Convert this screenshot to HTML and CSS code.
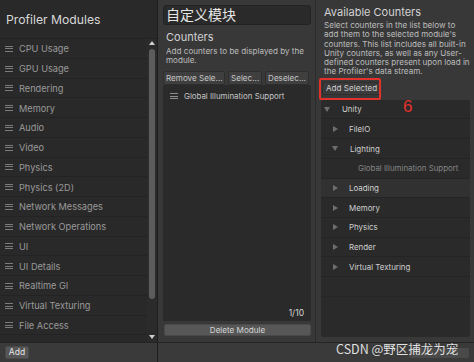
FILE: index.html
```html
<!DOCTYPE html>
<html lang="en">
<head>
<meta charset="utf-8">
<title>Profiler Modules</title>
<link rel="stylesheet" href="styles.css">
</head>
<body>
<div class="app">
  <div class="main">
    <section class="left">
      <header class="left-title">Profiler Modules</header>
      <div class="left-body">
        <ul class="module-list">
          <li class="module"><span class="grip"></span>CPU Usage</li>
          <li class="module"><span class="grip"></span>GPU Usage</li>
          <li class="module"><span class="grip"></span>Rendering</li>
          <li class="module"><span class="grip"></span>Memory</li>
          <li class="module"><span class="grip"></span>Audio</li>
          <li class="module"><span class="grip"></span>Video</li>
          <li class="module"><span class="grip"></span>Physics</li>
          <li class="module"><span class="grip"></span>Physics (2D)</li>
          <li class="module"><span class="grip"></span>Network Messages</li>
          <li class="module"><span class="grip"></span>Network Operations</li>
          <li class="module"><span class="grip"></span>UI</li>
          <li class="module"><span class="grip"></span>UI Details</li>
          <li class="module"><span class="grip"></span>Realtime GI</li>
          <li class="module"><span class="grip"></span>Virtual Texturing</li>
          <li class="module"><span class="grip"></span>File Access</li>
          <li class="module"></li>
        </ul>
        <div class="vscroll">
          <span class="arrow up"></span>
          <span class="thumb"></span>
          <span class="spacer"></span>
          <span class="arrow down"></span>
        </div>
      </div>
    </section>

    <section class="middle">
      <div class="name-field">自定义模块</div>
      <h2 class="heading">Counters</h2>
      <p class="desc">Add counters to be displayed by the module.</p>
      <div class="btn-row">
        <button class="btn btn-remove">Remove Sele...</button>
        <button class="btn btn-select">Selec...</button>
        <button class="btn btn-deselect">Deselec...</button>
      </div>
      <div class="counter-box">
        <div class="counter-item"><span class="grip light"></span>Global Illumination Support</div>
        <div class="count">1/10</div>
      </div>
      <button class="btn delete">Delete Module</button>
    </section>

    <section class="right">
      <h2 class="heading">Available Counters</h2>
      <p class="desc wide">Select counters in the list below to add them to the selected module's counters. This list includes all built-in Unity counters, as well as any User-defined counters present upon load in the Profiler's data stream.</p>
      <div class="add-row">
        <button class="btn add-selected">Add Selected</button>
        <span class="highlight-box"></span>
        <span class="step-num">6</span>
      </div>
      <div class="tree-box">
        <div class="tree-row lvl0"><span class="tri down"></span>Unity</div>
        <div class="tree-row lvl1"><span class="tri"></span>FileIO</div>
        <div class="tree-row lvl1"><span class="tri down"></span>Lighting</div>
        <div class="tree-row lvl2 leaf">Global Illumination Support</div>
        <div class="tree-row lvl1 hover"><span class="tri"></span>Loading</div>
        <div class="tree-row lvl1"><span class="tri"></span>Memory</div>
        <div class="tree-row lvl1"><span class="tri"></span>Physics</div>
        <div class="tree-row lvl1"><span class="tri"></span>Render</div>
        <div class="tree-row lvl1"><span class="tri"></span>Virtual Texturing</div>
        <div class="tree-row empty"></div>
      </div>
    </section>
  </div>

  <footer class="bottom">
    <div class="bottom-left"><button class="btn add">Add</button></div>
    <div class="bottom-rest"><span class="ghost-btn"></span></div>
    <span class="watermark">CSDN @野区捕龙为宠</span>
  </footer>
</div>
</body>
</html>
```

FILE: styles.css
```css
* { box-sizing: border-box; margin: 0; padding: 0; }

html, body {
  width: 474px;
  height: 362px;
  overflow: hidden;
  background: #383838;
}

body {
  font-family: Inter, "Noto Sans", "Noto Sans CJK SC", sans-serif;
  color: #c4c4c4;
}

.app {
  position: relative;
  width: 474px;
  height: 362px;
  display: flex;
  flex-direction: column;
}

.main {
  display: flex;
  height: 342px;
}

/* ---------- left panel ---------- */
.left {
  width: 158px;
  background: #292929;
  border-right: 1px solid #1e1e1e;
  display: flex;
  flex-direction: column;
}

.left-title {
  height: 39px;
  padding-left: 6px;
  display: flex;
  align-items: center;
  font-size: 12.2px;
  color: #d8d8d8;
  border-bottom: 1px solid #222;
  padding-top: 1px;
}

.left-body {
  flex: 1;
  display: flex;
  overflow: hidden;
}

.module-list {
  list-style: none;
  flex: 1;
  overflow: hidden;
}

.module {
  height: 19.75px;
  display: flex;
  align-items: center;
  padding-left: 5px;
  padding-top: 1px;
  font-size: 9.2px;
  color: #9a9a9a;
  border-bottom: 1px solid #232323;
  white-space: nowrap;
}

.grip {
  width: 8px;
  height: 6px;
  margin-right: 6px;
  flex: none;
  background: repeating-linear-gradient(#7c7c7c 0 1px, transparent 1px 2.5px);
}

.grip.light {
  background: repeating-linear-gradient(#8e8e8e 0 1px, transparent 1px 2.5px);
}

.vscroll {
  width: 10px;
  display: flex;
  flex-direction: column;
  align-items: center;
  padding: 2px 0 3px;
  background: #2b2b2b;
}

.arrow {
  width: 0;
  height: 0;
  border-left: 3px solid transparent;
  border-right: 3px solid transparent;
}

.arrow.up { border-bottom: 4px solid #d0d0d0; }
.arrow.down { border-top: 4px solid #d0d0d0; }

.thumb {
  margin-top: 4px;
  width: 6px;
  height: 250px;
  border-radius: 3px;
  background: #5c5c5c;
}

.spacer { flex: 1; }

/* ---------- shared ---------- */
.heading {
  font-weight: normal;
  font-size: 11px;
  line-height: 14px;
  color: #d2d2d2;
  padding-left: 3px;
}

.desc {
  font-size: 8.1px;
  line-height: 9.3px;
  color: #bdbdbd;
  padding-left: 3px;
}

.btn {
  font-family: inherit;
  font-size: 8.1px;
  color: #c8c8c8;
  background: #3f3f3f;
  border: 1px solid #2e2e2e;
  border-radius: 2px;
  white-space: nowrap;
  overflow: hidden;
}

/* ---------- middle panel ---------- */
.middle {
  width: 158px;
  background: #383838;
  border-right: 1px solid #2b2b2b;
  padding: 5px 4px 6px 5px;
  display: flex;
  flex-direction: column;
}

.name-field {
  height: 20px;
  background: #2a2a2a;
  border: 1px solid #232323;
  border-radius: 3px;
  font-size: 14px;
  line-height: 18px;
  padding-left: 2px;
  color: #e6e6e6;
}

.middle .heading { margin-top: 5px; }
.middle .desc { margin-top: 3px; }

.btn-row {
  display: flex;
  gap: 3px;
  margin-top: 5px;
  height: 14px;
}

.btn-row .btn { height: 14px; line-height: 12px; padding: 0 2px; }
.btn-remove { width: 62px; }
.btn-select { width: 34px; }
.btn-deselect { width: 44px; }

.counter-box {
  flex: 1;
  background: #2a2a2a;
  border-radius: 2px;
  display: flex;
  flex-direction: column;
  padding: 4px 7px 3px 7px;
}

.counter-item {
  display: flex;
  align-items: center;
  height: 14px;
  font-size: 7.9px;
  color: #c6c6c6;
  white-space: nowrap;
}

.count {
  margin-top: auto;
  text-align: right;
  font-size: 8.5px;
  color: #d6d6d6;
}

.btn.delete {
  margin-top: 3px;
  height: 12px;
  line-height: 10px;
  background: #575757;
  border-color: #4a4a4a;
  color: #d4d4d4;
  margin-left: 1px;
}

/* ---------- right panel ---------- */
.right {
  flex: 1;
  background: #383838;
  padding: 5px 4px 5px 5px;
  display: flex;
  flex-direction: column;
}

.right .desc { margin-top: 2px; }

.add-row {
  position: relative;
  height: 22px;
  margin-top: 1px;
  display: flex;
  align-items: center;
}

.add-selected {
  height: 13px;
  line-height: 11px;
  padding: 0 3px;
  margin-left: 1px;
  background: #3b3b3b;
  color: #d0d0d0;
}

.highlight-box {
  position: absolute;
  left: -2px;
  top: 0;
  width: 62px;
  height: 22px;
  border: 2px solid #e3312b;
  border-radius: 2px;
}

.step-num {
  position: absolute;
  left: 82px;
  top: 19px;
  font-family: "Liberation Sans", sans-serif;
  font-size: 17px;
  color: #e3312b;
}

.tree-box {
  flex: 1;
  background: #2a2a2a;
  border-radius: 2px;
  overflow: hidden;
}

.tree-row {
  height: 19.7px;
  display: flex;
  align-items: center;
  font-size: 7.9px;
  color: #d0d0d0;
  border-bottom: 1px solid #242424;
  white-space: nowrap;
}

.tree-row.hover { background: #313131; }
.lvl0 { padding-left: 4px; }
.lvl1 { padding-left: 12px; }
.lvl2 { padding-left: 37px; }
.leaf { color: #858585; }

.tri {
  width: 0;
  height: 0;
  margin-right: 11px;
  border-top: 3px solid transparent;
  border-bottom: 3px solid transparent;
  border-left: 5px solid #6e6e6e;
}

.tri.down {
  border-left: 3px solid transparent;
  border-right: 3px solid transparent;
  border-top: 5px solid #6e6e6e;
  border-bottom: 0;
  margin-right: 12px;
  margin-left: -1px;
}

.tree-row.empty { border-bottom: 1px solid #262626; }

/* ---------- bottom bar ---------- */
.bottom {
  height: 20px;
  display: flex;
  background: #3a3a3a;
  border-top: 1px solid #242424;
}

.bottom-left {
  width: 158px;
  border-right: 1px solid #1e1e1e;
  display: flex;
  align-items: center;
  padding-left: 5px;
}

.btn.add {
  width: 24px;
  height: 13px;
  line-height: 11px;
  background: #565656;
  border-color: #4a4a4a;
  color: #e4e4e4;
  font-size: 8.5px;
}

.bottom-rest {
  flex: 1;
  display: flex;
  align-items: center;
  justify-content: flex-end;
  padding-right: 5px;
}

.ghost-btn {
  width: 60px;
  height: 10px;
  background: #4a4a4a;
  border-radius: 2px;
}

.watermark {
  position: absolute;
  left: 336px;
  top: 339px;
  font-family: "Noto Sans CJK SC", sans-serif;
  font-size: 12.5px;
  color: rgba(255, 255, 255, 0.85);
  white-space: nowrap;
}
```
